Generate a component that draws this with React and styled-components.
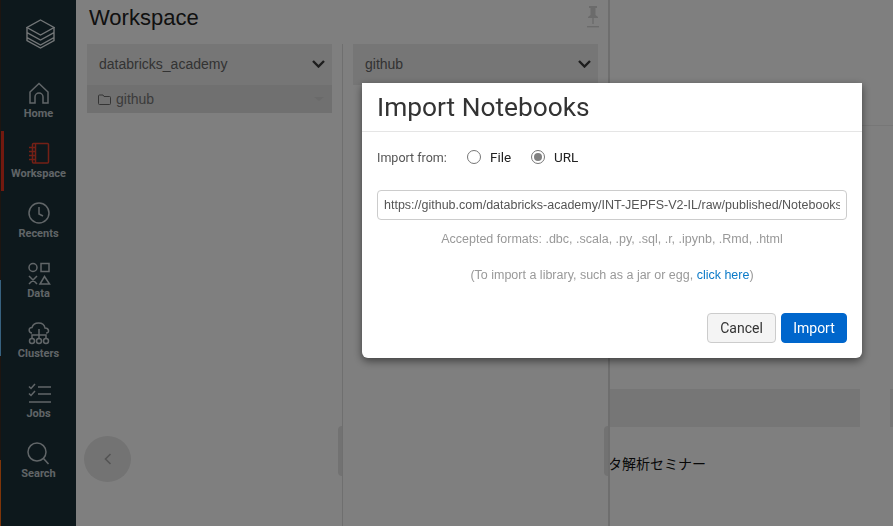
import React from "react";
import styled, { createGlobalStyle } from "styled-components";

const Global = createGlobalStyle`
  html, body { margin: 0; padding: 0; height: 100%; overflow: hidden; background: #fff; }
  #root { height: 100%; }
  * { box-sizing: border-box; }
`;

const Page = styled.div`
  display: flex;
  width: 893px;
  height: 526px;
  overflow: hidden;
  font-family: "Liberation Sans", Arial, sans-serif;
  color: #222;
`;

const Stripe = styled.div`
  width: 1px;
  display: flex;
  flex-direction: column;
  background: #2a2a2a;
`;
const StripeSegment = styled.div`
  height: ${(p) => p.$h}px;
  flex: ${(p) => (p.$grow ? 1 : "none")};
  background: ${(p) => p.$c};
`;

const Sidebar = styled.nav`
  width: 75px;
  background: #1b3139;
  display: flex;
  flex-direction: column;
`;
const Logo = styled.div`
  height: 71px;
  padding: 19px 0 0 25px;
  color: #e6ecef;
`;
const NavItem = styled.div`
  height: 60px;
  padding-top: 11px;
  display: flex;
  flex-direction: column;
  align-items: center;
  font-family: Roboto, Arial, sans-serif;
  font-size: 11px;
  font-weight: 700;
  line-height: 13px;
  color: #c0c9ce;
  box-shadow: ${(p) => (p.$active ? "inset 3px 0 0 #e6321f" : "none")};
`;
const NavIcon = styled.svg`
  width: 25px;
  height: 24px;
  margin-bottom: 1px;
  fill: none;
  stroke: ${(p) => (p.$active ? "#e8402c" : "#c3ccd1")};
  stroke-width: 1.5;
`;

const Main = styled.main`
  position: relative;
  flex: 1;
  min-width: 0;
`;
const MainTop = styled.div`
  height: 126px;
  border-bottom: 1px solid #eeeeee;
`;
const BarRow = styled.div`
  display: flex;
  gap: 30px;
  margin-top: 263px;
  padding-left: 300px;
`;
const Bar = styled.div`
  height: 38px;
  flex: ${(p) => (p.$wide ? "0 0 484px" : "1")};
  background: #ededed;
`;
const SeminarText = styled.div`
  margin: 26px 0 0 504px;
  font-family: "Noto Sans CJK JP", sans-serif;
  font-size: 14px;
  line-height: 20px;
  color: #111;
`;

const Drawer = styled.aside`
  position: absolute;
  left: 0;
  top: 0;
  bottom: 0;
  width: 534px;
  background: #fff;
  border-right: 2px solid #dcdcdc;
  display: flex;
  flex-direction: column;
`;
const DrawerHead = styled.header`
  height: 44px;
  flex: none;
  display: flex;
  justify-content: space-between;
  padding: 5px 8px 0 13px;
`;
const DrawerTitle = styled.h2`
  margin: 0;
  font-size: 22px;
  font-weight: 400;
  line-height: 26px;
  color: #222;
`;
const Pin = styled.svg`
  width: 14px;
  height: 22px;
  margin-top: 1px;
  color: #d6d6d6;
`;
const Columns = styled.div`
  flex: 1;
  display: flex;
`;
const Column = styled.section`
  width: ${(p) => p.$w}px;
  padding: 0 ${(p) => p.$r}px 0 ${(p) => p.$l}px;
  border-right: ${(p) => (p.$divider ? "1px solid #dfdfdf" : "none")};
`;
const ColumnHead = styled.div`
  height: 41px;
  padding: 0 7px 2px 12px;
  display: flex;
  align-items: center;
  justify-content: space-between;
  background: #ececec;
  font-size: 14px;
  color: #666;
`;
const Chevron = styled.svg`
  width: 13px;
  height: 8px;
  fill: none;
  stroke: #3a3a3a;
  stroke-width: 2.4;
`;
const FolderRow = styled.div`
  height: 28px;
  padding: 0 8px 0 11px;
  display: flex;
  align-items: center;
  gap: 5px;
  background: #e0e0e0;
  font-size: 14px;
  color: #777;
`;
const FolderIcon = styled.svg`
  width: 13px;
  height: 11px;
  fill: none;
  stroke: #6a6a6a;
  stroke-width: 1;
`;
const Caret = styled.span`
  margin-left: auto;
  width: 0;
  height: 0;
  border-left: 5px solid transparent;
  border-right: 5px solid transparent;
  border-top: 4px solid #d4d4d4;
`;
const BackButton = styled.button`
  position: absolute;
  left: 8px;
  top: 436px;
  width: 47px;
  height: 46px;
  padding: 0;
  border: 0;
  border-radius: 50%;
  background: #e6e6e6;
  display: flex;
  align-items: center;
  justify-content: center;
`;
const BackIcon = styled.svg`
  width: 8px;
  height: 12px;
  fill: none;
  stroke: #a8a8a8;
  stroke-width: 1.6;
`;
const Handle = styled.div`
  position: absolute;
  left: ${(p) => p.$x}px;
  top: 426px;
  width: 4px;
  height: 50px;
  border-radius: 4px 0 0 4px;
  background: #e4e4e4;
`;

const Overlay = styled.div`
  position: fixed;
  inset: 0;
  background: rgba(0, 0, 0, 0.5);
  padding: 83px 0 0 362px;
`;
const Modal = styled.div`
  width: 500px;
  height: 275px;
  background: #fff;
  border-radius: 0 0 6px 6px;
  box-shadow: 0 3px 9px rgba(0, 0, 0, 0.5);
  font-family: Roboto, Arial, sans-serif;
  color: #333;
`;
const ModalHead = styled.div`
  height: 49px;
  padding: 8px 15px 0;
  border-bottom: 1px solid #e5e5e5;
`;
const ModalTitle = styled.h3`
  margin: 0;
  font-size: 26.3px;
  font-weight: 400;
  line-height: 32px;
`;
const ModalBody = styled.div`
  padding: 0 15px;
`;
const SourceRow = styled.div`
  height: 50px;
  display: flex;
  align-items: center;
  font-size: 12.5px;
  color: #555;
`;
const SourceLabel = styled.span`
  width: 90px;
`;
const RadioOption = styled.label`
  width: 64px;
  display: flex;
  align-items: center;
  gap: 9px;
  font-size: 13.5px;
  color: #222;
`;
const RadioDot = styled.span`
  width: 14px;
  height: 14px;
  border-radius: 50%;
  border: 1px solid #767676;
  background: #fff;
  display: flex;
  align-items: center;
  justify-content: center;
  &::after {
    content: "";
    width: 8px;
    height: 8px;
    border-radius: 50%;
    background: ${(p) => (p.$on ? "#808080" : "transparent")};
  }
`;
const UrlInput = styled.input`
  display: block;
  width: 470px;
  height: 30px;
  margin-top: 8px;
  padding: 0 6px;
  border: 1px solid #ccc;
  border-radius: 4px;
  font-family: "Liberation Sans", Arial, sans-serif;
  font-size: 12.5px;
  color: #555;
  outline: none;
`;
const Hint = styled.p`
  margin: ${(p) => p.$top}px 0 0;
  text-align: center;
  font-family: "Liberation Sans", Arial, sans-serif;
  font-size: 12.5px;
  line-height: 18px;
  color: #999;
`;
const HintLink = styled.a`
  color: #0b7ac8;
`;
const Actions = styled.div`
  margin-top: 29px;
  display: flex;
  justify-content: flex-end;
  gap: 5px;
`;
const Btn = styled.button`
  height: 30px;
  width: ${(p) => (p.$primary ? 66 : 69)}px;
  padding: 0;
  border-radius: 4px;
  border: 1px solid ${(p) => (p.$primary ? "#0066cc" : "#ccc")};
  background: ${(p) => (p.$primary ? "#0066cc" : "#f4f4f4")};
  color: ${(p) => (p.$primary ? "#fff" : "#333")};
  font-family: Roboto, Arial, sans-serif;
  font-size: 14px;
`;

const NAV = [
  ["Home", <path d="M4 21V10L13 1.5 22 10V21H17V15a4 4 0 0 0-8 0V21Z" />],
  ["Workspace", <><rect x="6.5" y="1.5" width="16" height="19.5" rx="1" /><path d="M3 5.5H9M3 9.5H9M3 13.5H9M3 17.5H9M9.5 2V21" /></>, true],
  ["Recents", <><circle cx="13" cy="11" r="10" /><path d="M13 5V12L17 14" /></>],
  ["Data", <><circle cx="7" cy="5.5" r="4" /><rect x="15" y="1.5" width="8" height="8" /><path d="M3 14L11 22M11 14L3 22M18.5 14.5L23.5 22H14Z" /></>],
  ["Clusters", <><path d="M6 11C2.5 11 2 5.5 6 5.5 7 2 9 1 12.5 1 16 1 18.5 3 19 6 23 6 24 11 20 11M13 7V16.5M6 16.5V13H20V16.5" /><circle cx="6" cy="19" r="2.5" /><circle cx="13" cy="19" r="2.5" /><circle cx="20" cy="19" r="2.5" /></>],
  ["Jobs", <path d="M3 4.5L5 6.5 9 2M3 11.5L5 13.5 9 9M12 5H25M12 12H25M3 20H25" />],
  ["Search", <><circle cx="11" cy="10" r="9" /><path d="M17.5 16.5L22.5 22" /></>],
];

export default function App() {
  return (
    <Page>
      <Global />
      <Stripe>
        <StripeSegment $h={280} $c="#3a2a22" />
        <StripeSegment $h={76} $c="#6fc3ff" />
        <StripeSegment $h={104} $c="#3a2a22" />
        <StripeSegment $grow $c="#ff6a13" />
      </Stripe>
      <Sidebar>
        <Logo>
          <svg width="29" height="30" viewBox="0 0 29 30" fill="none" stroke="currentColor" strokeWidth="1.4">
            <path d="M14.5 1L28 8.5 14.5 16 1 8.5Z" />
            <path d="M1 8.5V13.5L14.5 21 28 13.5V8.5M1 13.5V18.5L14.5 26 28 18.5V13.5M1 18.5V21.5L14.5 29 28 21.5V18.5" />
          </svg>
        </Logo>
        {NAV.map(([label, icon, active]) => (
          <NavItem key={label} $active={active}>
            <NavIcon viewBox="0 0 25 24" $active={active}>{icon}</NavIcon>
            {label}
          </NavItem>
        ))}
      </Sidebar>
      <Main>
        <MainTop />
        <BarRow>
          <Bar $wide />
          <Bar />
        </BarRow>
        <SeminarText>データ解析セミナー</SeminarText>
        <Drawer>
          <DrawerHead>
            <DrawerTitle>Workspace</DrawerTitle>
            <Pin viewBox="0 0 14 22" fill="currentColor">
              <path d="M3 0H11V2H9.5V9L12 11V12H2V11L4.5 9V2H3Z" />
              <path d="M6.3 12H7.7V18H6.3Z" />
              <path d="M1 20H13V21.4H1Z" />
            </Pin>
          </DrawerHead>
          <Columns>
            <Column $w={267} $l={11} $r={10} $divider>
              <ColumnHead>
                databricks_academy
                <Chevron viewBox="0 0 13 8"><path d="M1 1L6.5 6.5 12 1" /></Chevron>
              </ColumnHead>
              <FolderRow>
                <FolderIcon viewBox="0 0 13 11">
                  <path d="M.5 2A1 1 0 0 1 1.5 1H5L6 2.5H11.5A1 1 0 0 1 12.5 3.5V9.5A1 1 0 0 1 11.5 10.500H1.500A1 1 0 0 1 .5 9.500Z" />
                </FolderIcon>
                github
                <Caret />
              </FolderRow>
            </Column>
            <Column $w={255} $l={10} $r={0}>
              <ColumnHead>
                github
                <Chevron viewBox="0 0 13 8"><path d="M1 1L6.5 6.5 12 1" /></Chevron>
              </ColumnHead>
            </Column>
          </Columns>
          <BackButton aria-label="Back">
            <BackIcon viewBox="0 0 8 12"><path d="M6.500 1L1.500 6 6.500 11" /></BackIcon>
          </BackButton>
          <Handle $x={262} />
          <Handle $x={528} />
        </Drawer>
      </Main>
      <Overlay>
        <Modal>
          <ModalHead>
            <ModalTitle>Import Notebooks</ModalTitle>
          </ModalHead>
          <ModalBody>
            <SourceRow>
              <SourceLabel>Import from:</SourceLabel>
              <RadioOption><RadioDot />File</RadioOption>
              <RadioOption><RadioDot $on />URL</RadioOption>
            </SourceRow>
            <UrlInput readOnly value="https://github.com/databricks-academy/INT-JEPFS-V2-IL/raw/published/Notebooks" />
            <Hint $top={10}>Accepted formats: .dbc, .scala, .py, .sql, .r, .ipynb, .Rmd, .html</Hint>
            <Hint $top={18}>(To import a library, such as a jar or egg, <HintLink>click here</HintLink>)</Hint>
            <Actions>
              <Btn>Cancel</Btn>
              <Btn $primary>Import</Btn>
            </Actions>
          </ModalBody>
        </Modal>
      </Overlay>
    </Page>
  );
}
